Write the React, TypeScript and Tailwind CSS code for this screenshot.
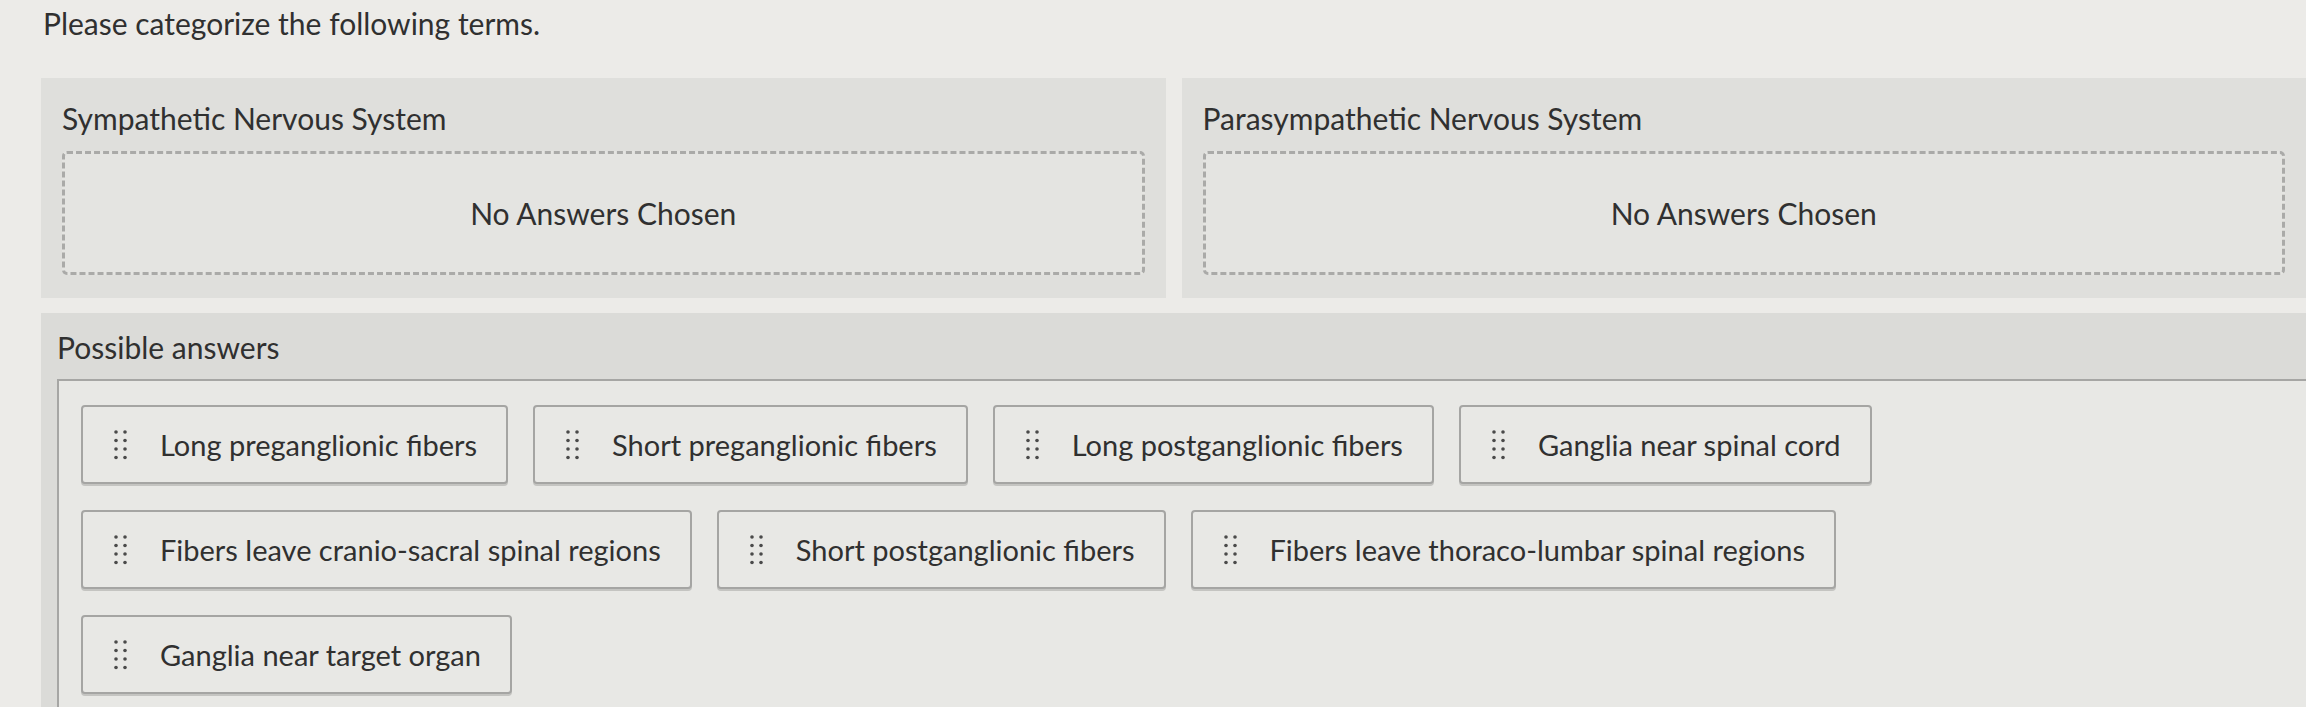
import React from "react";

const rows = [
  [
    "Long preganglionic fibers",
    "Short preganglionic fibers",
    "Long postganglionic fibers",
    "Ganglia near spinal cord",
  ],
  [
    "Fibers leave cranio-sacral spinal regions",
    "Short postganglionic fibers",
    "Fibers leave thoraco-lumbar spinal regions",
  ],
  ["Ganglia near target organ"],
];

function Handle() {
  const dots = [];
  for (let r = 0; r < 4; r++) {
    for (let c = 0; c < 2; c++) {
      dots.push(<circle key={`${r}-${c}`} cx={2 + c * 9} cy={2 + r * 8.5} r={1.8} fill="#4a4a4a" />);
    }
  }
  return (
    <svg width="13" height="30" viewBox="0 0 13 30" className="shrink-0">
      {dots}
    </svg>
  );
}

function Chip({ label }: { label: string }) {
  return (
    <div className="flex h-[79px] items-center rounded-[4px] border-2 border-[#a5a5a3] bg-[#e8e8e5] pl-[31px] pr-[29px] text-[29px] shadow-[0_2px_0_#c4c4c1]">
      <Handle />
      <span className="ml-[33px] whitespace-nowrap">{label}</span>
    </div>
  );
}

function Category({ title }: { title: string }) {
  return (
    <div className="flex-1 bg-[#dfdfdc] px-[21px] pt-[22px] pb-[23px]">
      <div className="leading-[36px]">{title}</div>
      <div className="mt-[15px] flex h-[124px] items-center justify-center rounded-[5px] border-[3px] border-dashed border-[#aaaaa8] bg-[#e4e4e1]">
        No Answers Chosen
      </div>
    </div>
  );
}

export default function App() {
  return (
    <div
      className="h-[707px] w-full overflow-hidden bg-[#ecebe8] text-[30px] text-[#303030]"
      style={{ fontFamily: "Lato, 'Noto Sans', sans-serif" }}
    >
      <div className="pl-[43px] pt-[5px] leading-[36px]">Please categorize the following terms.</div>
      <div className="mt-[37px] flex gap-4 pl-[41px]">
        <Category title="Sympathetic Nervous System" />
        <Category title="Parasympathetic Nervous System" />
      </div>
      <div className="ml-[41px] mt-[15px] bg-[#dbdbd8] pl-[16px] pt-[16px]">
        <div className="leading-[36px]">Possible answers</div>
        <div className="mt-[14px] flex flex-col gap-y-[26px] border-2 border-r-0 border-[#a6a6a4] bg-[#e8e8e5] pb-[40px] pl-[22px] pt-[24px]">
          {rows.map((row, i) => (
            <div key={i} className="flex gap-x-[25px]">
              {row.map((a) => (
                <Chip key={a} label={a} />
              ))}
            </div>
          ))}
        </div>
      </div>
    </div>
  );
}
